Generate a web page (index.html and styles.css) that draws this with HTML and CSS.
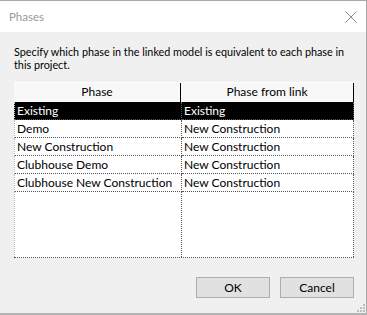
FILE: index.html
```
<!DOCTYPE html>
<html lang="en">
<head>
    <meta charset="UTF-8">
    <title>Phases</title>
    <link rel="stylesheet" href="styles.css">
</head>
<body>

<div class="window">
    <div class="titlebar">
        <span class="title">Phases</span>
        <svg class="close" width="12" height="12" viewBox="0 0 12 12">
            <path d="M0.5 0.5 L11.5 11.5 M11.5 0.5 L0.5 11.5" stroke="#8a8a8a" stroke-width="1" fill="none"/>
        </svg>
    </div>

    <div class="content">
        <p class="prompt">Specify which phase in the linked model is equivalent to each phase in this project.</p>

        <div class="grid">
            <div class="grid-head">
                <div class="hcell first">Phase</div>
                <div class="hcell">Phase from link</div>
            </div>
            <div class="grid-body">
                <div class="row selected">
                    <div class="cell first">Existing</div>
                    <div class="cell">Existing</div>
                </div>
                <div class="row">
                    <div class="cell first">Demo</div>
                    <div class="cell">New Construction</div>
                </div>
                <div class="row">
                    <div class="cell first">New Construction</div>
                    <div class="cell">New Construction</div>
                </div>
                <div class="row">
                    <div class="cell first">Clubhouse Demo</div>
                    <div class="cell">New Construction</div>
                </div>
                <div class="row">
                    <div class="cell first">Clubhouse New Construction</div>
                    <div class="cell">New Construction</div>
                </div>
                <div class="row filler">
                    <div class="cell first"></div>
                    <div class="cell"></div>
                </div>
            </div>
        </div>

        <div class="buttons">
            <button class="btn">OK</button>
            <button class="btn">Cancel</button>
        </div>

        <svg class="grip" width="8" height="8" viewBox="0 0 8 8">
            <rect x="6" y="0" width="2" height="2" fill="#bcbcbc"/>
            <rect x="3" y="3" width="2" height="2" fill="#bcbcbc"/>
            <rect x="6" y="3" width="2" height="2" fill="#bcbcbc"/>
            <rect x="0" y="6" width="2" height="2" fill="#bcbcbc"/>
            <rect x="3" y="6" width="2" height="2" fill="#bcbcbc"/>
            <rect x="6" y="6" width="2" height="2" fill="#bcbcbc"/>
        </svg>
    </div>
</div>

</body>
</html>
```

FILE: styles.css
```
body {
    margin: 0;
    font-family: 'Lato', 'Noto Sans', sans-serif;
    font-size: 12px;
    background-color: #f0f0f0;
}

.window {
    width: 366px;
    height: 312px;
    border-top: 1px solid #a8a8a8;
    border-right: 1px solid #a8a8a8;
    border-bottom: 2px solid #b4b4b4;
    display: flex;
    flex-direction: column;
    background-color: #f0f0f0;
}

.titlebar {
    height: 31px;
    background-color: #fff;
    display: flex;
    align-items: center;
    justify-content: space-between;
    padding: 0 8px 0 9px;
}

.title {
    color: #9a9a9a;
    font-size: 11.5px;
}

.close {
    margin-right: 1px;
}

.content {
    flex: 1;
    position: relative;
    padding: 13px 10px 0 14px;
}

.prompt {
    margin: 0;
    font-size: 10.8px;
    line-height: 13px;
    color: #000;
}

.grid {
    margin-top: 11px;
    width: 340px;
}

.grid-head {
    display: flex;
    height: 19px;
    background-color: #f8f8f8;
    border-top: 1px solid #fff;
}

.hcell {
    flex: 1;
    text-align: center;
    line-height: 18px;
    border-right: 1px solid #000;
}

.hcell.first {
    flex: 0 0 166px;
}

.grid-body {
    background-color: #fff;
    border-bottom: 1px dotted #555;
}

.row {
    display: flex;
    height: 18px;
}

.cell {
    flex: 1;
    line-height: 17px;
    padding-left: 2px;
    border-bottom: 1px dotted #555;
    border-right: 1px dotted #555;
    white-space: nowrap;
}

.cell.first {
    flex: 0 0 164px;
    border-left: 1px dotted #bbb;
}

.row.selected .cell {
    background-color: #000;
    color: #fff;
}

.row.filler {
    height: 65px;
}

.row.filler .cell {
    border-bottom: none;
}

.buttons {
    display: flex;
    justify-content: flex-end;
    gap: 10px;
    margin-top: 19px;
    padding-right: 2px;
}

.btn {
    width: 74px;
    height: 21px;
    font-family: inherit;
    font-size: 12px;
    background-color: #e1e1e1;
    border: 1px solid #adadad;
    color: #000;
    padding: 0;
}

.grip {
    position: absolute;
    right: 1px;
    bottom: 1px;
}
```
